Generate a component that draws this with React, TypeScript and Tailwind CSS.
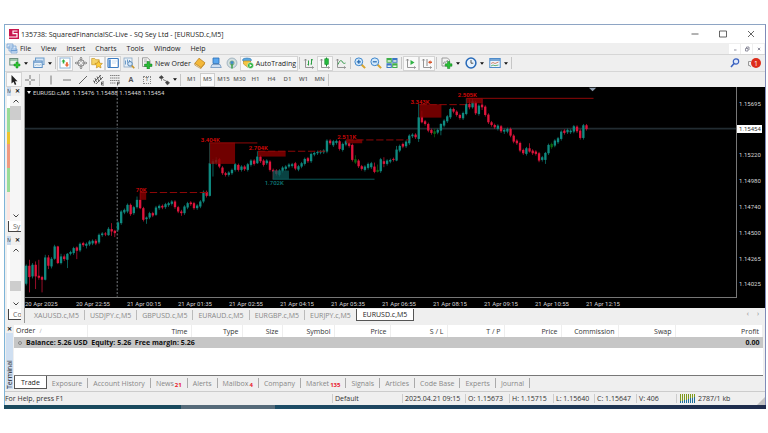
import React from 'react';
import clsx from 'clsx';

// Bars are [open, close, high?, low?] measured downwards from the segment base.
type Bar = [number, number, number?, number?];

const SEGMENTS: { base: number; bars: Bar[] }[] = [
  {
    base: 339,
    bars: [
      [252, 198], [198, 232, 180, 278], [230, 195, 190, 236], [195, 230, 185, 268], [228, 234, 180, 240], [232, 240, 228, 278],
      [240, 173, 165, 242], [173, 198, 166, 208], [200, 177, 172, 206], [177, 140, 135, 180], [140, 190, 138, 193], [190, 170, 162, 194],
      [170, 178, 164, 184], [180, 162, 160, 205], [162, 157], [160, 145], [143, 153, 140, 178], [152, 132], [130, 136], [138, 132, 128, 146],
      [134, 125], [131, 123], [123, 131, 118, 136], [128, 105], [106, 101], [101, 104], [106, 87, 82, 108], [88, 95, 70, 108],
      [93, 100, 90, 112], [90, 68],
    ],
  },
  {
    base: 99,
    bars: [
      [310, 275], [278, 270], [275, 255], [255, 283], [280, 262], [262, 240, 230, 266], [240, 265, 220, 268], [265, 300], [298, 293, 290, 312],
      [293, 280], [280, 287], [285, 263, 258, 288], [265, 258], [258, 263], [262, 253], [256, 250], [252, 245], [245, 262], [262, 275],
      [275, 280, 270, 288], [280, 260], [263, 250], [248, 253], [250, 265], [265, 257], [260, 245], [245, 216, 212, 250], [216, 228],
      [228, 130, 68, 230], [132, 124, 118, 170], [128, 120, 112, 134], [118, 140], [143, 160], [160, 165], [165, 158], [160, 150], [150, 133],
      [135, 150], [150, 140], [140, 148], [150, 133], [135, 122], [122, 132], [130, 110, 94, 132], [110, 124], [122, 135], [130, 122],
      [125, 150], [150, 155, 146, 178], [152, 162], [165, 152], [153, 143], [147, 140], [140, 134], [138, 133], [130, 146],
    ],
  },
  {
    base: -9,
    bars: [
      [257, 247], [248, 238], [240, 225], [223, 232], [232, 210], [212, 207], [208, 204], [206, 203], [205, 200], [203, 170], [170, 178],
      [184, 172], [177, 171], [172, 195], [198, 180], [182, 172], [178, 186], [183, 228], [226, 236, 214, 240], [230, 247], [247, 255],
      [258, 248], [252, 240], [250, 238], [248, 264, 236, 268], [264, 258, 242, 266], [262, 226], [232, 240, 220, 250], [240, 230], [233, 228],
      [225, 228], [230, 197, 186, 232], [200, 186], [180, 188], [187, 173], [178, 155], [157, 152], [152, 160], [165, 100, 60, 174],
      [98, 115, 80, 118], [112, 120], [120, 140], [138, 147], [150, 142, 134, 160], [146, 138], [140, 120, 118, 154], [125, 110], [112, 97],
      [100, 75], [75, 83], [83, 93], [93, 102], [103, 87], [90, 60, 43, 94], [60, 70, 46, 76], [70, 52, 44, 74], [55, 88], [90, 65],
      [62, 70, 44, 78], [68, 93], [92, 115], [115, 123], [123, 130], [135, 125], [127, 142], [143, 138, 134, 150], [143, 135], [135, 155],
      [155, 173], [170, 178], [177, 200], [198, 208], [210, 193], [193, 203, 178, 206], [200, 208], [203, 210], [208, 230], [228, 220],
      [228, 207, 204, 240], [208, 183], [190, 180], [185, 170], [175, 163], [165, 143], [140, 147], [145, 138], [145, 140], [143, 127],
      [128, 142], [140, 162], [162, 124], [124, 135],
    ],
  },
];

const CANDLES = SEGMENTS.flatMap(({ base, bars }) =>
  bars.map(([open, close, high, low]) => {
    const top = Math.min(open, close);
    const bottom = Math.max(open, close);
    return {
      up: close < open,
      top: base + top,
      bottom: base + bottom,
      high: base + (high ?? top - 4),
      low: base + (low ?? bottom + 5),
    };
  })
);

const STEP = 9.51;
const DARK_BARS = [104, 111, 129, 166];

const ZONES = [
  { x: 345, y: 316, w: 19, h: 23, end: 548, dashed: true, label: '70K', lx: 333 },
  { x: 555, y: 167, w: 76, h: 64, end: 698, dashed: false, label: '3.404K', lx: 528 },
  { x: 700, y: 192, w: 83, h: 17, end: 903, dashed: true, label: '2.704K', lx: 672 },
  { x: 965, y: 158, w: 48, h: 11, end: 1153, dashed: true, label: '2.511K', lx: 938 },
  { x: 1185, y: 52, w: 66, h: 40, end: 1323, dashed: true, label: '3.343K', lx: 1158 },
  { x: 1326, y: 33, w: 48, h: 16, end: 1708, dashed: false, label: '2.505K', lx: 1300 },
];

const PRICES = ['1.15695', '1.15454', '1.15220', '1.14980', '1.14740', '1.14500', '1.14265', '1.14025'];

const TIMES = [
  '20 Apr 2025', '20 Apr 22:55', '21 Apr 00:15', '21 Apr 01:35', '21 Apr 02:55', '21 Apr 04:15',
  '21 Apr 05:35', '21 Apr 06:55', '21 Apr 08:15', '21 Apr 09:15', '21 Apr 10:55', '21 Apr 12:15',
];

const CHART_TABS = ['XAUUSD.c,M5', 'USDJPY.c,M5', 'GBPUSD.c,M5', 'EURAUD.c,M5', 'EURGBP.c,M5', 'EURJPY.c,M5', 'EURUSD.c,M5'];

const TERMINAL_TABS: { name: string; count?: number }[] = [
  { name: 'Trade' }, { name: 'Exposure' }, { name: 'Account History' }, { name: 'News', count: 21 }, { name: 'Alerts' },
  { name: 'Mailbox', count: 4 }, { name: 'Company' }, { name: 'Market', count: 135 }, { name: 'Signals' }, { name: 'Articles' },
  { name: 'Code Base' }, { name: 'Experts' }, { name: 'Journal' },
];

const COLUMNS = [
  { name: 'Order', width: 'w-[73px]' },
  { name: 'Time', width: 'w-[104px]' },
  { name: 'Type', width: 'w-[51px]' },
  { name: 'Size', width: 'w-[40px]' },
  { name: 'Symbol', width: 'w-[52px]' },
  { name: 'Price', width: 'w-[56px]' },
  { name: 'S / L', width: 'w-[57px]' },
  { name: 'T / P', width: 'w-[57px]' },
  { name: 'Price', width: 'w-[57px]' },
  { name: 'Commission', width: 'w-[57px]' },
  { name: 'Swap', width: 'w-[57px]' },
  { name: 'Profit', width: 'w-auto' },
];

function Icon({ children }: { children: React.ReactNode }) {
  return (
    <svg viewBox="0 0 12 12" className="size-3 shrink-0" fill="none" aria-hidden="true">
      {children}
    </svg>
  );
}

function Plus({ x, y }: { x: number; y: number }) {
  return (
    <path
      transform={`translate(${x} ${y})`}
      d="M2 0h2v2h2v2H4v2H2V4H0V2h2z"
      fill="#2fc52f"
      stroke="#0c8a1c"
      strokeWidth=".5"
    />
  );
}

const axes = <path d="M2.500 2v8.500H10.500M1.300 3.500 2.500 2l1.200 1.500M9.300 9.300l1.200 1.200-1.200 1.200" stroke="#8a8a8a" strokeWidth=".9" />;

const icons = {
  newChart: (
    <Icon>
      <rect x=".8" y="1.500" width="8" height="6.500" fill="#e8f2e8" stroke="#6f8f80" />
      <path d="M1 3h8" stroke="#5f9f70" />
      <Plus x={5} y={5} />
    </Icon>
  ),
  profiles: (
    <Icon>
      <rect x="2.500" y="1" width="8.500" height="6.500" fill="#d5e6f7" stroke="#6c9cc9" />
      <rect x=".7" y="4" width="8.500" height="6.500" fill="#eaf3fc" stroke="#5c8fc4" />
      <path d="M1 5.200h8" stroke="#5c8fc4" />
      <path d="M2 8.500c2-2 4 1 6-1" stroke="#8ab" strokeWidth=".7" />
    </Icon>
  ),
  marketWatch: (
    <Icon>
      <rect x="1" y="1" width="10" height="10" fill="#fff" stroke="#8db4d8" />
      <path d="M2.500 4.500 4.500 2.300l2 2.200H5.300v2H3.700v-2z" fill="#2fae3c" />
      <path d="M5.500 7.500 8 10l2.300-2.500H8.900V5.300H6.900v2.200z" fill="#ee6a3a" />
    </Icon>
  ),
  dataWindow: (
    <Icon>
      <circle cx="6" cy="6" r="3.300" stroke="#777" />
      <path d="M6 0v12M0 6h12" stroke="#777" strokeWidth=".8" />
      <path d="M4.800 1.500 6 .2l1.200 1.300M4.800 10.500 6 11.800l1.200-1.300M1.500 4.800.2 6l1.300 1.200M10.500 4.800 11.800 6l-1.300 1.200" stroke="#777" strokeWidth=".7" />
      <rect x="5" y="5" width="2" height="2" fill="#eee" />
    </Icon>
  ),
  navigator: (
    <Icon>
      <path d="M.7 1.500h3l1 1.200h3.500v5H.7z" fill="#f6d56a" stroke="#c9992b" strokeWidth=".7" />
      <path d="m7.600 3.800 1.200 2.300 2.600.4-1.900 1.800.5 2.600-2.400-1.200-2.300 1.200.4-2.600L3.800 6.500l2.600-.4z" fill="#ffcf3a" stroke="#b9811b" strokeWidth=".6" />
    </Icon>
  ),
  terminal: (
    <Icon>
      <rect x="1" y="1.500" width="10.300" height="9" rx=".8" fill="#fff" stroke="#3c7cc2" strokeWidth="1.200" />
      <path d="M2 2.500h1.800v7.500H2z" fill="#5a95d6" />
      <path d="M5 4h5M5 6h4" stroke="#c9ddf1" />
    </Icon>
  ),
  tester: (
    <Icon>
      <rect x="1" y="1" width="8" height="9" fill="#e8f0f8" stroke="#8aa7c4" strokeWidth=".8" />
      <path d="M2.500 3.500v4M4.500 2.500v3M6.500 3v2" stroke="#6c9cc9" />
      <circle cx="7" cy="6.800" r="2.300" fill="#cfe6fa" stroke="#5b87b5" />
      <path d="m8.800 8.600 2.500 2.600" stroke="#c9962c" strokeWidth="1.600" />
    </Icon>
  ),
  newOrder: (
    <Icon>
      <path d="M1.500.8h5l2.500 2.400v6.300H1.500z" fill="#f4f4f4" stroke="#888" strokeWidth=".8" />
      <path d="M3 3h3M3 4.800h4" stroke="#999" strokeWidth=".7" />
      <path d="M6 4.500h2.500V7H11v2.500H8.500V12H6V9.500H3.500V7H6z" fill="#28b934" stroke="#117a20" strokeWidth=".5" />
    </Icon>
  ),
  editor: (
    <Icon>
      <path d="M.8 6.500 5 1.200l6 4.600-4 5z" fill="#f3b83a" stroke="#b47a15" strokeWidth=".7" />
      <path d="M.8 6.500v1.600l6 3.500V10.500z" fill="#fff2cf" stroke="#b47a15" strokeWidth=".6" />
      <path d="m7 11.500 4-4.500V5.800l-4 4.700z" fill="#c98a1c" />
    </Icon>
  ),
  vps: (
    <Icon>
      <path d="M3 1h6v5.500H3z" fill="#58a6ef" stroke="#2f6fb5" strokeWidth=".8" />
      <path d="M2 7.500h8l1.300 3H.7z" fill="#cfe0f3" stroke="#5d87b4" strokeWidth=".7" />
    </Icon>
  ),
  signals: (
    <Icon>
      <circle cx="6" cy="6" r="5" fill="#c8d6dd" stroke="#93a8b4" strokeWidth=".7" />
      <circle cx="6" cy="6" r="3.200" fill="#8fb09a" stroke="#fff" strokeWidth=".7" />
      <circle cx="6" cy="5.500" r="1.500" fill="#3f8bc4" />
      <path d="M6 7v4.500" stroke="#3aa04c" strokeWidth="1.500" />
    </Icon>
  ),
  autoTrading: (
    <Icon>
      <ellipse cx="5" cy="3" rx="4.500" ry="2" fill="#5aa7e0" stroke="#2f76b0" strokeWidth=".6" />
      <path d="M1.500 4h7v2.500L6 10.500 1.500 7z" fill="#f4c542" stroke="#b98a1d" strokeWidth=".6" />
      <circle cx="8.500" cy="8.500" r="3" fill="#2fb344" stroke="#fff" strokeWidth=".5" />
      <path d="m7.600 7 2.400 1.500L7.600 10z" fill="#fff" />
    </Icon>
  ),
  bars: (
    <Icon>
      {axes}
      <path d="M5.500 3.500v5M4.500 7.500h1M8.500 2v5.500M8.500 2.800H10M7.500 7h1" stroke="#2e9e45" />
    </Icon>
  ),
  candles: (
    <Icon>
      {axes}
      <path d="M7.500.5v9" stroke="#148a2b" />
      <rect x="5.800" y="1.800" width="3.500" height="5.500" fill="#25b83d" stroke="#148a2b" strokeWidth=".6" />
    </Icon>
  ),
  line: (
    <Icon>
      {axes}
      <path d="M3 7.500C5 2.500 6.500 3 7.500 5s2 1.500 3 1" stroke="#3d9c52" />
    </Icon>
  ),
  zoomIn: (
    <Icon>
      <path d="m7.500 7.500 3.600 3.600" stroke="#d9a52f" strokeWidth="2" />
      <circle cx="4.800" cy="4.800" r="3.900" fill="#d3e9fb" stroke="#3f86cc" />
      <path d="M4.800 2.800v4M2.800 4.800h4" stroke="#2468b0" strokeWidth="1.200" />
    </Icon>
  ),
  zoomOut: (
    <Icon>
      <path d="m7.500 7.500 3.600 3.600" stroke="#d9a52f" strokeWidth="2" />
      <circle cx="4.800" cy="4.800" r="3.900" fill="#d3e9fb" stroke="#3f86cc" />
      <path d="M2.800 4.800h4" stroke="#2468b0" strokeWidth="1.200" />
    </Icon>
  ),
  tile: (
    <Icon>
      <path d="M.5 1h5.300v4.700H.5zM6.200 6.200h5.300V11H6.200z" fill="#3fae49" />
      <path d="M6.200 1h5.300v4.700H6.200zM.5 6.200h5.300V11H.5z" fill="#3b76c4" />
      <path d="M1.500 3.200h3.300v1.500H1.500zM7.200 3.200h3.300v1.500H7.200zM1.500 8.400h3.300v1.500H1.500zM7.200 8.400h3.300v1.500H7.200z" fill="#e9f6ea" />
    </Icon>
  ),
  autoScroll: (
    <Icon>
      {axes}
      <path d="m5.500 3 4 2.500-4 2.500z" fill="#2fb344" />
    </Icon>
  ),
  shift: (
    <Icon>
      {axes}
      <path d="M6 2v7" stroke="#8a8a8a" />
      <path d="m7 5.300 2.500-2V4.500H11v1.600H9.500v1.200z" fill="#d9542b" />
    </Icon>
  ),
  indicators: (
    <Icon>
      <path d="M1 1h5.500l2 2v6H1z" fill="#f2f2f2" stroke="#888" strokeWidth=".8" />
      <path d="M2.500 7c1-5 2 1 4-4" stroke="#666" strokeWidth=".7" />
      <path d="M6.500 4.500h2.300v2.300H11v2.400H8.800v2.300H6.500V9.200H4.200V6.800h2.300z" fill="#28c034" stroke="#117a20" strokeWidth=".5" />
    </Icon>
  ),
  clock: (
    <Icon>
      <circle cx="6" cy="6" r="4.900" fill="#e6f2fd" stroke="#2769b8" strokeWidth="1.500" />
      <path d="M6 3v3.200h2.300" stroke="#444" strokeWidth=".9" />
    </Icon>
  ),
  template: (
    <Icon>
      <rect x=".8" y="1.500" width="10.400" height="9" fill="#eef5fc" stroke="#4d8ac9" />
      <path d="M1 3h10" stroke="#4d8ac9" strokeWidth="1.500" />
      <path d="m2 6.500 2-1 2 1 3.500-1.500" stroke="#c9664a" strokeWidth=".8" />
      <path d="m2 9 2-1 2 .7L9.500 8" stroke="#3f9f58" strokeWidth=".8" />
    </Icon>
  ),
  cursor: (
    <Icon>
      <path d="M3.500 1v8.500l2-1.800 1.400 3.200 1.400-.6L7 7.200h2.500z" fill="#222" />
    </Icon>
  ),
  crosshair: (
    <Icon>
      <path d="M6 1v4M6 7v4M1 6h4M7 6h4" stroke="#777" />
    </Icon>
  ),
  vline: (
    <Icon>
      <path d="M6 1.500v9" stroke="#777" />
    </Icon>
  ),
  hline: (
    <Icon>
      <path d="M2 6h8" stroke="#777" />
    </Icon>
  ),
  trend: (
    <Icon>
      <path d="m2 10 8-8" stroke="#666" />
    </Icon>
  ),
  channel: (
    <Icon>
      <path d="m1 8 7-7M3 10l7-7M2 4l1.500 4M4 2.500l2 5M6.500 1.500 8 6M.5 6.500 2 9.500" stroke="#444" strokeWidth=".8" />
      <path d="M8.500 8h2.500M8.500 9.500h2M8.500 11H11M8.500 8v3" stroke="#333" strokeWidth=".7" />
    </Icon>
  ),
  fibo: (
    <Icon>
      <path d="M1 1.500h10M1 4h10M1 6.500h10M1 9h6" stroke="#777" strokeWidth=".9" strokeDasharray="1.500 .5" />
      <path d="M8.500 8.200H11M8.500 9.700h2M8.500 8.200v3.300" stroke="#333" strokeWidth=".8" />
    </Icon>
  ),
  arrows: (
    <Icon>
      <path d="m1 3.500 2.500-2 2 2-2 1.500zM3.500 5v2" fill="#444" stroke="#444" strokeWidth=".5" />
      <path d="m5 5.500 4 2M7.500 8.500 9.500 7l2 2-2.200 1.800z" fill="#444" stroke="#444" strokeWidth=".7" />
    </Icon>
  ),
};

type ToolProps = { label: string; pressed?: boolean; caret?: boolean; text?: string; children?: React.ReactNode };

function Tool({ label, pressed, caret, text, children }: ToolProps) {
  return (
    <button
      type="button"
      aria-label={label}
      className={clsx(
        'flex h-[15px] shrink-0 items-center justify-center',
        text ? 'gap-0.5 px-px' : caret ? 'w-6 gap-[3px]' : 'w-4',
        pressed && 'border border-[#d4d4d4] bg-[#f9f9f9]'
      )}
    >
      {children}
      {text && <span className="text-[#222]">{text}</span>}
      {caret && <Caret />}
    </button>
  );
}

function Caret() {
  return (
    <svg viewBox="0 0 4 3" className="h-[3px] w-1 shrink-0" aria-hidden="true">
      <path d="M0 .3h4L2 2.700z" fill="#111" />
    </svg>
  );
}

function Divider() {
  return <span className="mx-px h-3 w-px shrink-0 bg-[#c6c6c6]" />;
}

function TitleBar() {
  return (
    <header className="flex h-[18px] items-center bg-white pr-2 pl-1">
      <svg viewBox="0 0 10 10" className="size-2.5" aria-hidden="true">
        <path d="M0 0h10v10H0z" fill="#c8174f" />
        <path d="M8.500 2H4v2.700h4V8H0" stroke="#fff" strokeWidth="1.200" fill="none" />
      </svg>
      <h1 className="ml-0.5 grow text-[#222]">135738: SquaredFinancialSC-Live - SQ Sey Ltd - [EURUSD.c,M5]</h1>
      <div className="flex gap-4 text-[#555]">
        {[
          ['Minimize', 'M2.500 6h7'],
          ['Maximize', 'M2.500 3h7v6h-7z'],
          ['Close', 'm3 3 6 6M9 3 3 9'],
        ].map(([name, d]) => (
          <button key={name} type="button" aria-label={name}>
            <Icon>
              <path d={d} stroke="currentColor" strokeWidth=".9" />
            </Icon>
          </button>
        ))}
      </div>
    </header>
  );
}

function MenuBar() {
  return (
    <nav className="flex h-[11px] items-center bg-[#efefef] pl-px">
      <Icon>
        <path d="M1 1h6v4H1zM3 3h7v5H3zM5 6h6v4H5z" fill="#dbe9f8" stroke="#6a9bd1" strokeWidth=".7" />
        <path d="M5 7.500h6" stroke="#6a9bd1" />
      </Icon>
      <div className="ml-0.5 flex grow gap-2.5 text-[#222]">
        {['File', 'View', 'Insert', 'Charts', 'Tools', 'Window', 'Help'].map((item) => (
          <button key={item} type="button">
            {item}
          </button>
        ))}
      </div>
      <div className="mr-px flex gap-px">
        {[
          ['Minimize chart', 'M5 7h2.500'],
          ['Restore chart', 'M4.500 5.500h2.500v2.500h-2.500zM5.500 5V4h2.500v3'],
          ['Close chart', 'm4.800 4.800 2.400 2.400M7.200 4.800l-2.400 2.400'],
        ].map(([name, d]) => (
          <button key={name} type="button" aria-label={name} className="flex h-2.5 w-[11px] items-center justify-center bg-white">
            <Icon>
              <path d={d} stroke="#778" strokeWidth=".8" />
            </Icon>
          </button>
        ))}
      </div>
    </nav>
  );
}

function MainToolbar() {
  return (
    <div className="flex h-[17px] items-center border-t border-[#d6d6d6] bg-[#efefef] pl-px">
      <Tool label="New chart" caret>{icons.newChart}</Tool>
      <Tool label="Profiles" caret>{icons.profiles}</Tool>
      <Divider />
      <Tool label="Market Watch" pressed>{icons.marketWatch}</Tool>
      <Tool label="Data window">{icons.dataWindow}</Tool>
      <Tool label="Navigator" pressed>{icons.navigator}</Tool>
      <Tool label="Terminal" pressed>{icons.terminal}</Tool>
      <Tool label="Strategy tester">{icons.tester}</Tool>
      <Divider />
      <Tool label="New Order" text="New Order">{icons.newOrder}</Tool>
      <Tool label="MetaEditor">{icons.editor}</Tool>
      <Tool label="Virtual hosting">{icons.vps}</Tool>
      <Tool label="Signals">{icons.signals}</Tool>
      <Tool label="AutoTrading" text="AutoTrading" pressed>{icons.autoTrading}</Tool>
      <Divider />
      <Tool label="Bar chart">{icons.bars}</Tool>
      <Tool label="Candlesticks" pressed>{icons.candles}</Tool>
      <Tool label="Line chart">{icons.line}</Tool>
      <Divider />
      <Tool label="Zoom in">{icons.zoomIn}</Tool>
      <Tool label="Zoom out">{icons.zoomOut}</Tool>
      <Tool label="Tile windows">{icons.tile}</Tool>
      <Divider />
      <Tool label="Auto scroll" pressed>{icons.autoScroll}</Tool>
      <Tool label="Chart shift" pressed>{icons.shift}</Tool>
      <Divider />
      <Tool label="Indicators" caret>{icons.indicators}</Tool>
      <Tool label="Periods" caret>{icons.clock}</Tool>
      <Tool label="Templates" caret>{icons.template}</Tool>
      <Divider />
      <div className="mr-1 ml-auto flex items-center gap-1.5">
        <button type="button" aria-label="Search">
          <Icon>
            <circle cx="7" cy="4.500" r="2.700" fill="#dfe9fb" stroke="#3b62c0" strokeWidth="1.200" />
            <path d="M5 6.500 2 10" stroke="#3b62c0" strokeWidth="1.600" />
          </Icon>
        </button>
        <button type="button" aria-label="1 notification" className="flex items-end">
          <svg viewBox="0 0 4 7" className="h-[7px] w-1" aria-hidden="true">
            <path d="M4 .5H1.500v4H3L3.500 6" stroke="#999" fill="none" />
          </svg>
          <span className="flex size-2.5 items-center justify-center rounded-full bg-[#dd2c1a] text-white">1</span>
        </button>
      </div>
    </div>
  );
}

function ChartToolbar() {
  return (
    <div className="flex h-4 items-center border-t border-[#d6d6d6] bg-[#efefef] pl-px">
      <Tool label="Cursor" pressed>{icons.cursor}</Tool>
      <Tool label="Crosshair">{icons.crosshair}</Tool>
      <Divider />
      <div className="ml-0.5 flex items-center">
        <Tool label="Vertical line">{icons.vline}</Tool>
        <Tool label="Horizontal line">{icons.hline}</Tool>
        <Tool label="Trendline">{icons.trend}</Tool>
        <Tool label="Channel">{icons.channel}</Tool>
        <Tool label="Fibonacci">{icons.fibo}</Tool>
        <Tool label="Text"><span className="font-bold text-[#555]">A</span></Tool>
        <Tool label="Text label">
          <span className="flex size-2 items-center justify-center border border-dotted border-[#888] text-[6px] text-[#555]">T</span>
        </Tool>
        <Tool label="Arrows" caret>{icons.arrows}</Tool>
      </div>
      <Divider />
      <div className="ml-0.5 flex gap-px text-[6px] font-semibold text-[#666]">
        {['M1', 'M5', 'M15', 'M30', 'H1', 'H4', 'D1', 'W1', 'MN'].map((tf) => (
          <button
            key={tf}
            type="button"
            className={clsx('h-3.5 w-[15px]', tf === 'M5' && 'border border-[#ccc] bg-[#f9f9f9]')}
          >
            {tf}
          </button>
        ))}
      </div>
      <Divider />
    </div>
  );
}

function Chevron({ up }: { up?: boolean }) {
  return (
    <svg viewBox="0 0 6 4" className="mx-auto my-[3px] h-1 w-1.5 shrink-0" fill="none" aria-hidden="true">
      <path d={up ? 'M.5 3.500 3 1l2.500 2.500' : 'M.5.500 3 3 5.500.5'} stroke="#444" />
    </svg>
  );
}

function DockPanel({ tab, className, strip, thumb }: { tab: string; className: string; strip?: React.ReactNode; thumb: string }) {
  return (
    <section className={clsx('flex flex-col', className)}>
      <div className="ml-0.5 flex h-[9px] items-center justify-between pr-1 text-[6px]">
        <span className="w-1 overflow-hidden bg-[#c9d9ec] text-[#456]">M</span>
        <button type="button" aria-label="Close panel" className="font-bold text-[#111]">✕</button>
      </div>
      <div className="mr-[3px] ml-0.5 flex grow bg-[#f6f6f6]">
        <div className="w-[3px] bg-white pt-3">{strip}</div>
        <div className="flex grow flex-col">
          <Chevron up />
          <div className="flex grow flex-col">
            <div className={clsx('bg-[#cdcdcd]', thumb)} />
          </div>
          <Chevron />
        </div>
      </div>
      <button type="button" className="mr-[3px] ml-[3px] h-[11px] overflow-hidden border-b border-l border-[#444] bg-white pl-1 text-left text-[#666]">
        {tab}
      </button>
    </section>
  );
}

function LeftDock() {
  return (
    <aside className="flex w-[19px] shrink-0 flex-col gap-1 bg-[#efefef]">
      <DockPanel
        tab="Sy"
        className="h-[145px]"
        thumb="h-3.5"
        strip={
          <>
            <div className="h-6 bg-[#98dc98]" />
            <div className="h-3 bg-[#edc52f]" />
            <div className="h-6 bg-[#f09a80]" />
            <div className="h-6 bg-[#98dc98]" />
            <div className="h-7 bg-[#fbe6e2]" />
          </>
        }
      />
      <DockPanel tab="Co" className="h-[84px]" thumb="mt-auto mb-2 h-2.5" />
    </aside>
  );
}

function Plot() {
  return (
    <svg viewBox="0 0 2136 630" preserveAspectRatio="xMinYMin meet" className="h-[210px] w-full" role="img" aria-label="EURUSD.c M5 candlestick chart">
      <path d="M277 0v630" stroke="#7b8084" strokeWidth="3" strokeDasharray="6 5" />
      <path d="M0 125h2136" stroke="#222c32" strokeWidth="5" />
      {CANDLES.map((c, i) => {
        const x = 3.6 + i * STEP;
        const color = DARK_BARS.includes(i) ? '#0b6a12' : c.up ? '#0f8a80' : '#e0143c';
        return (
          <g key={i} fill={color}>
            <rect x={x - 1} y={c.high} width="2" height={c.low - c.high} />
            <rect x={x - 3.5} y={c.top} width="7" height={Math.max(c.bottom - c.top, 3)} />
          </g>
        );
      })}
      {ZONES.map((z) => (
        <g key={z.label}>
          <rect x={z.x} y={z.y} width={z.w} height={z.h} fill="#8c0000" fillOpacity=".8" />
          <path d={`M${z.x} ${z.y + 1}H${z.end}`} stroke="#900808" strokeWidth="3" strokeDasharray={z.dashed ? '22 8' : undefined} />
          <text x={z.lx} y={z.y - 2} fontSize="18" fontWeight="500" fill="#e00808">
            {z.label}
          </text>
        </g>
      ))}
      <rect x="744" y="251" width="49" height="26" fill="#0c5a5a" fillOpacity=".75" />
      <path d="M744 277h306" stroke="#0b5a5a" strokeWidth="3" />
      <text x="720" y="293" fontSize="18" fontWeight="500" fill="#0e7d7a">
        1.702K
      </text>
      <path d="M1694 2h22l-11 11z" fill="#8c9bab" />
    </svg>
  );
}

function ChartWindow() {
  return (
    <div className="flex bg-black font-[Roboto,sans-serif] text-[6px] text-[#d5d5d5]">
      <div className="min-w-0 grow">
        <div className="relative border-r border-b border-[#777]">
          <Plot />
          <div className="absolute top-px left-0.5 flex items-center gap-0.5">
            <svg viewBox="0 0 4 3" className="h-[3px] w-1" aria-hidden="true">
              <path d="M0 0h4L2 3z" fill="#eee" />
            </svg>
            <span className="whitespace-pre">EURUSD.c,M5  1.15476 1.15488 1.15448 1.15454</span>
          </div>
        </div>
        <div className="flex h-2.5 items-center">
          {TIMES.map((t) => (
            <span key={t} className="w-[51px] whitespace-nowrap">
              {t}
            </span>
          ))}
        </div>
      </div>
      <div className="flex h-[201px] w-7 flex-col justify-between pt-3">
        {PRICES.map((p) => (
          <span key={p} className={clsx('flex h-2 items-center pl-0.5', p === '1.15454' && 'mr-[3px] bg-white text-[#333]')}>
            {p}
          </span>
        ))}
      </div>
    </div>
  );
}

function ChartTabs() {
  return (
    <div className="flex h-[15px] items-start bg-[#efefef] pt-px pl-1" role="tablist">
      {CHART_TABS.map((tab, i) => {
        const active = i === CHART_TABS.length - 1;
        return (
          <button
            key={tab}
            type="button"
            role="tab"
            aria-selected={active}
            className={clsx(
              active ? 'h-3 border border-t-0 border-[#555] bg-white px-1.5 text-[#222]' : 'my-px h-2.5 border-r border-[#bbb] px-[5px] text-[#888]',
              i === CHART_TABS.length - 2 && 'border-r-0'
            )}
          >
            {tab}
          </button>
        );
      })}
      <div className="mr-1.5 ml-auto flex gap-2 text-[#888]">
        <button type="button" aria-label="Scroll tabs left">‹</button>
        <button type="button" aria-label="Scroll tabs right">›</button>
      </div>
    </div>
  );
}

function Terminal() {
  return (
    <section className="flex bg-[#efefef] pt-0.5 pb-0.5">
      <div className="flex w-[9px] shrink-0 flex-col items-center">
        <button type="button" aria-label="Close terminal" className="h-2 text-[6px] font-bold text-[#111]">✕</button>
        <div className="flex w-[7px] grow items-center justify-start bg-[#cfdff1] [writing-mode:vertical-rl] rotate-180">
          <span className="text-[#222]">Terminal</span>
        </div>
      </div>
      <div className="mr-0.5 min-w-0 grow">
        <div className="h-[51px] border-b border-[#777] bg-white">
          <table className="w-full table-fixed border-collapse">
            <thead>
              <tr className="h-3 text-[#333]">
                {COLUMNS.map((col, i) => (
                  <th
                    key={i}
                    scope="col"
                    className={clsx('border-r border-[#eee] p-0 font-normal', col.width, i === 0 ? 'pl-0.5 text-left' : 'pr-[3px] text-right')}
                  >
                    {col.name}
                    {i === 0 && <span className="ml-1 text-[6px] text-[#aaa]">∕</span>}
                  </th>
                ))}
              </tr>
            </thead>
            <tbody>
              <tr className="h-[11px] bg-[#c6c6c6] font-bold text-[#111]">
                <td colSpan={11} className="p-0 pl-1">
                  <div className="flex items-center gap-1">
                    <span className="size-1 rounded-full border border-[#888]" />
                    <span className="whitespace-pre">Balance: 5.26 USD  Equity: 5.26  Free margin: 5.26</span>
                  </div>
                </td>
                <td className="p-0 pr-[3px] text-right">0.00</td>
              </tr>
            </tbody>
          </table>
        </div>
        <div className="flex h-[13px] items-start" role="tablist">
          {TERMINAL_TABS.map(({ name, count }, i) => (
            <button
              key={name}
              type="button"
              role="tab"
              aria-selected={i === 0}
              className={clsx(
                'flex items-center whitespace-nowrap',
                i === 0 ? 'h-[13px] border border-t-0 border-[#555] bg-white px-1.5 text-[#222]' : 'mt-0.5 h-2.5 border-r border-[#aaa] px-[5px] text-[#888]'
              )}
            >
              {name}
              {count && <span className="mt-1 ml-px text-[6px] font-bold text-[#e8202c]">{count}</span>}
            </button>
          ))}
        </div>
      </div>
    </section>
  );
}

function StatusBar() {
  return (
    <footer className="flex h-3.5 items-center border-t border-[#ccc] bg-[#efefef] text-[#333]">
      <span className="w-[327px] shrink">For Help, press F1</span>
      <span className="w-[70px] border-l border-[#ccc] pl-0.5">Default</span>
      <span className="w-[63px] border-l border-[#ccc] pl-0.5">2025.04.21 09:15</span>
      <span className="w-11 border-l border-[#ccc] pl-0.5">O: 1.15673</span>
      <span className="w-11 border-l border-[#ccc] pl-0.5">H: 1.15715</span>
      <span className="w-[41px] border-l border-[#ccc] pl-0.5">L: 1.15640</span>
      <span className="w-[42px] border-l border-[#ccc] pl-0.5">C: 1.15647</span>
      <span className="w-10 border-l border-[#ccc] pl-0.5">V: 406</span>
      <span className="flex items-center gap-[3px] border-l border-[#ccc] pl-[3px]">
        <svg viewBox="0 0 15 9" className="h-[9px] w-[15px]" shapeRendering="crispEdges" aria-hidden="true">
          <path d="M.5 0v7M2.500 0v7M4.500 0v6M6.500 0v6M8.500 0v5M10.500 0v4M12.500 0v4M14.500 0v3" stroke="#7f9a1c" />
          <path d="M.5 7v2M2.500 7v2M4.500 6v3M6.500 6v3M8.500 5v4M10.500 4v5M12.500 4v5M14.500 3v6" stroke="#1f6f9a" />
        </svg>
        2787/1 kb
      </span>
      <svg viewBox="0 0 8 8" className="mt-auto ml-auto size-2" aria-hidden="true">
        <path d="M8 0v8H0z" fill="#c2c2c2" />
      </svg>
    </footer>
  );
}

export default function App() {
  return (
    <div className="min-h-screen bg-white pt-6 pr-0.5 pl-1 font-['Open_Sans','Noto_Sans',sans-serif] text-[7px] leading-[9px]">
      <div className="border border-b-0 border-t-[#8ea5c4] border-r-[#7f8bb8] border-l-[#7db4d8]">
        <TitleBar />
        <MenuBar />
        <MainToolbar />
        <ChartToolbar />
        <div className="flex bg-[#efefef]">
          <LeftDock />
          <div className="min-w-0 grow border-l border-[#999]">
            <ChartWindow />
            <ChartTabs />
          </div>
        </div>
        <Terminal />
        <StatusBar />
      </div>
      <div className="flex h-1">
        <div className="w-[177px] bg-[#1a4a5e]" />
        <div className="w-[94px] bg-[#566b7a]" />
        <div className="grow bg-linear-to-r from-[#1d4d66] to-[#1f2c4c]" />
      </div>
    </div>
  );
}
